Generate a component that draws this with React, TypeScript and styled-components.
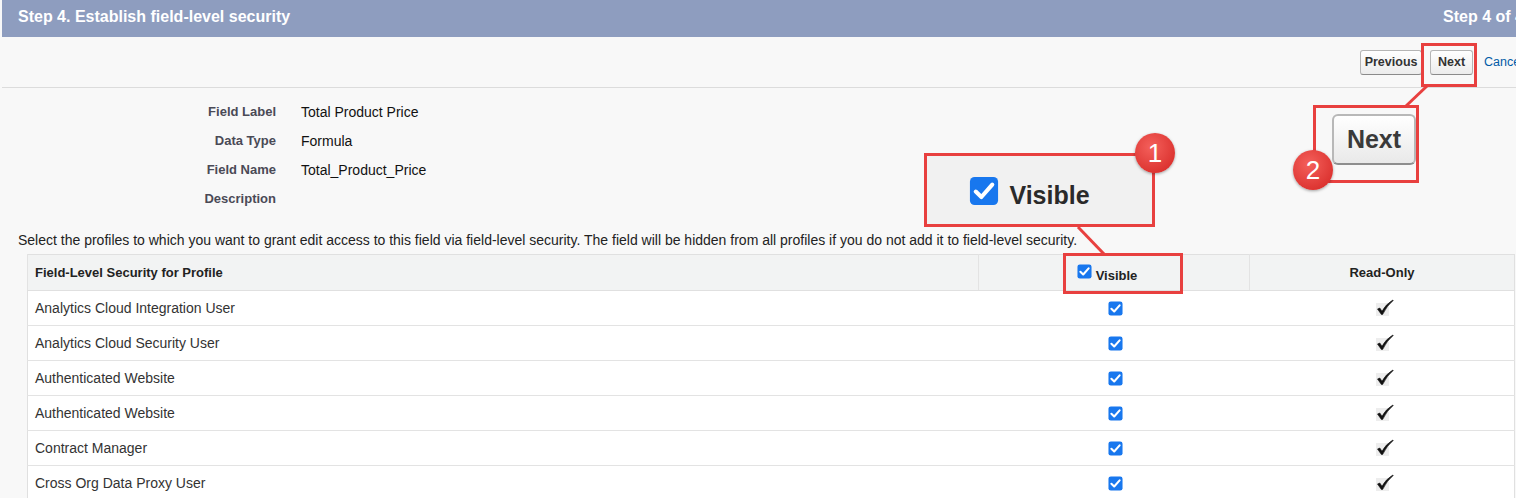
import styled, { createGlobalStyle } from "styled-components";

const GlobalStyle = createGlobalStyle`
  html, body {
    margin: 0;
    padding: 0;
    background: #f8f8f8;
    overflow: hidden;
  }
  body {
    font-family: "Liberation Sans", Arial, sans-serif;
  }
`;

const RED = "#e8403f";

const profiles = [
  "Analytics Cloud Integration User",
  "Analytics Cloud Security User",
  "Authenticated Website",
  "Authenticated Website",
  "Contract Manager",
  "Cross Org Data Proxy User",
];

const fields = [
  { label: "Field Label", value: "Total Product Price" },
  { label: "Data Type", value: "Formula" },
  { label: "Field Name", value: "Total_Product_Price" },
  { label: "Description", value: "" },
];

const BlueCheck = ({ size }: { size: number }) => (
  <svg width={size} height={size} viewBox="0 0 16 16">
    <rect x="0.5" y="0.5" width="15" height="15" rx="2.5" fill="#1877ee" />
    <path
      d="M3.6 8.3 L6.6 11.2 L12.4 4.6"
      fill="none"
      stroke="#fff"
      strokeWidth="2.2"
      strokeLinecap="round"
      strokeLinejoin="round"
    />
  </svg>
);

const ReadOnlyCheck = () => (
  <svg width="19" height="18" viewBox="0 0 19 18">
    <rect x="1" y="4" width="13" height="13" fill="#ededed" />
    <path
      d="M2.5 10 L4.8 9 L7 12.2 Q10.5 5.5 17.8 1 L18.2 1.6 Q12 6.5 7.6 15.5 L6.4 15.5 Z"
      fill="#111"
      stroke="#111"
      strokeWidth="0.6"
      strokeLinejoin="round"
    />
  </svg>
);

const App = () => {
  return (
    <>
      <GlobalStyle />
      <S.Page>
        <S.Header>
          <span>Step 4. Establish field-level security</span>
          <span>Step 4 of 4</span>
        </S.Header>

        <S.ButtonBar>
          <S.Button $w={62}>Previous</S.Button>
          <S.Button $w={43}>Next</S.Button>
          <S.Link>Cancel</S.Link>
        </S.ButtonBar>

        <S.Body>
          <S.FieldGrid>
            {fields.map((f) => (
              <S.FieldRow key={f.label}>
                <S.FieldLabel>{f.label}</S.FieldLabel>
                <S.FieldValue>{f.value}</S.FieldValue>
              </S.FieldRow>
            ))}
          </S.FieldGrid>

          <S.Instructions>
            Select the profiles to which you want to grant edit access to this field via
            field-level security. The field will be hidden from all profiles if you do not add
            it to field-level security.
          </S.Instructions>

          <S.Table>
            <colgroup>
              <col style={{ width: 951 }} />
              <col style={{ width: 271 }} />
              <col style={{ width: 265 }} />
            </colgroup>
            <thead>
              <tr>
                <S.Th>Field-Level Security for Profile</S.Th>
                <S.Th $center>
                  <S.VisibleHead>
                    <BlueCheck size={15} />
                    <span>Visible</span>
                  </S.VisibleHead>
                </S.Th>
                <S.Th $center>Read-Only</S.Th>
              </tr>
            </thead>
            <tbody>
              {profiles.map((p, i) => (
                <tr key={i}>
                  <S.Td>{p}</S.Td>
                  <S.Td $center>
                    <S.CellIcon $shift={2}>
                      <BlueCheck size={15} />
                    </S.CellIcon>
                  </S.Td>
                  <S.Td $center>
                    <S.CellIcon $shift={5}>
                      <ReadOnlyCheck />
                    </S.CellIcon>
                  </S.Td>
                </tr>
              ))}
            </tbody>
          </S.Table>
        </S.Body>

        {/* annotation overlay */}
        <S.Connectors width="1516" height="498">
          <line x1="1078" y1="227" x2="1104" y2="254" stroke={RED} strokeWidth="3" />
          <line x1="1427" y1="86" x2="1406" y2="106" stroke={RED} strokeWidth="3" />
        </S.Connectors>

        <S.Callout $x={924} $y={153} $w={231} $h={74}>
          <S.ZoomVisible>
            <BlueCheck size={30} />
            <span>Visible</span>
          </S.ZoomVisible>
        </S.Callout>
        <S.Callout $x={1063} $y={253} $w={120} $h={41} $clear />
        <S.Callout $x={1421} $y={43} $w={56} $h={44} $clear />
        <S.Callout $x={1313} $y={105} $w={106} $h={78} $clear>
          <S.ZoomButton>Next</S.ZoomButton>
        </S.Callout>

        <S.Badge $x={1155} $y={153}>1</S.Badge>
        <S.Badge $x={1313} $y={170}>2</S.Badge>
      </S.Page>
    </>
  );
};

export default App;

const S = {
  Page: styled.div`
    position: relative;
    width: 1516px;
    height: 498px;
    overflow: hidden;
    background: #f8f8f8;
    padding-left: 2px;
    box-sizing: border-box;
  `,
  Header: styled.div`
    width: 1546px;
    height: 37px;
    box-sizing: border-box;
    padding: 0 24px 3px 16px;
    background: #8e9dbf;
    color: #ffffff;
    font-weight: bold;
    font-size: 16px;
    display: flex;
    align-items: center;
    justify-content: space-between;
  `,
  ButtonBar: styled.div`
    width: 1545px;
    height: 51px;
    box-sizing: border-box;
    border-bottom: 1px solid #dcdcdc;
    display: flex;
    align-items: center;
    justify-content: flex-end;
    gap: 8px;
    padding-right: 24px;
  `,
  Button: styled.div<{ $w: number }>`
    width: ${(p) => p.$w}px;
    height: 25px;
    box-sizing: border-box;
    display: flex;
    align-items: center;
    justify-content: center;
    font-size: 12.5px;
    font-weight: bold;
    color: #333;
    background: linear-gradient(#ffffff, #ececec);
    border: 1px solid #b5b5b5;
    border-bottom-color: #8a8a8a;
    border-radius: 3px;
  `,
  Link: styled.span`
    margin-left: 3px;
    font-size: 12.5px;
    color: #015ba7;
  `,
  Body: styled.div`
    padding-top: 9px;
  `,
  FieldGrid: styled.div`
    display: flex;
    flex-direction: column;
  `,
  FieldRow: styled.div`
    height: 29px;
    display: grid;
    grid-template-columns: 274px 1fr;
    column-gap: 25px;
    align-items: center;
  `,
  FieldLabel: styled.span`
    text-align: right;
    font-size: 13px;
    font-weight: bold;
    color: #4a4a56;
  `,
  FieldValue: styled.span`
    font-size: 14px;
    color: #111;
  `,
  Instructions: styled.p`
    margin: 19px 0 0 16px;
    font-size: 14px;
    line-height: 16px;
    color: #222;
    white-space: nowrap;
  `,
  Table: styled.table`
    margin: 6px 0 0 25px;
    width: 1487px;
    table-layout: fixed;
    border-collapse: collapse;
    background: #ffffff;
    border: 1px solid #e0e0e0;
  `,
  Th: styled.th<{ $center?: boolean }>`
    height: 35px;
    padding: 0 7px;
    background: #f2f3f3;
    border-left: 1px solid #e3e3e3;
    border-bottom: 1px solid #e0e0e0;
    text-align: ${(p) => (p.$center ? "center" : "left")};
    font-size: 13px;
    font-weight: bold;
    color: #222;
  `,
  VisibleHead: styled.span`
    display: inline-flex;
    align-items: flex-end;
    gap: 4px;
    padding-right: 14px;
    span {
      line-height: 13px;
      margin-bottom: -3px;
    }
  `,
  Td: styled.td<{ $center?: boolean }>`
    height: 34px;
    padding: 0 7px;
    border-bottom: 1px solid #e3e3e3;
    text-align: ${(p) => (p.$center ? "center" : "left")};
    font-size: 14px;
    color: #333;
  `,
  CellIcon: styled.span<{ $shift?: number }>`
    display: inline-flex;
    vertical-align: middle;
    margin-left: ${(p) => p.$shift ?? 0}px;
  `,
  Connectors: styled.svg`
    position: absolute;
    left: 0;
    top: 0;
    pointer-events: none;
  `,
  Callout: styled.div<{ $x: number; $y: number; $w: number; $h: number; $clear?: boolean }>`
    position: absolute;
    left: ${(p) => p.$x}px;
    top: ${(p) => p.$y}px;
    width: ${(p) => p.$w}px;
    height: ${(p) => p.$h}px;
    box-sizing: border-box;
    border: 3px solid ${RED};
    background: ${(p) => (p.$clear ? "transparent" : "#f1f1f1")};
    display: flex;
    align-items: center;
    justify-content: center;
  `,
  ZoomVisible: styled.div`
    display: flex;
    align-items: center;
    gap: 10px;
    margin-left: -20px;
    margin-top: 2px;
    span {
      font-size: 25px;
      font-weight: bold;
      color: #2a2a2a;
      margin-top: 8px;
    }
  `,
  ZoomButton: styled.div`
    width: 88px;
    height: 51px;
    margin-left: 16px;
    margin-top: -9px;
    box-sizing: border-box;
    display: flex;
    align-items: center;
    justify-content: center;
    font-size: 25px;
    font-weight: bold;
    color: #3a3a3a;
    background: linear-gradient(#ffffff, #e9e9e9);
    border: 2px solid #b8b8b8;
    border-bottom-color: #8e8e8e;
    border-radius: 6px;
  `,
  Badge: styled.div<{ $x: number; $y: number }>`
    position: absolute;
    left: ${(p) => p.$x - 20}px;
    top: ${(p) => p.$y - 20}px;
    width: 40px;
    height: 40px;
    border-radius: 50%;
    background: radial-gradient(circle at 40% 35%, #f4605b, #dc3330 75%);
    box-shadow: 0 1px 3px rgba(0, 0, 0, 0.35);
    color: #fff;
    font-size: 26px;
    display: flex;
    align-items: center;
    justify-content: center;
  `,
};
